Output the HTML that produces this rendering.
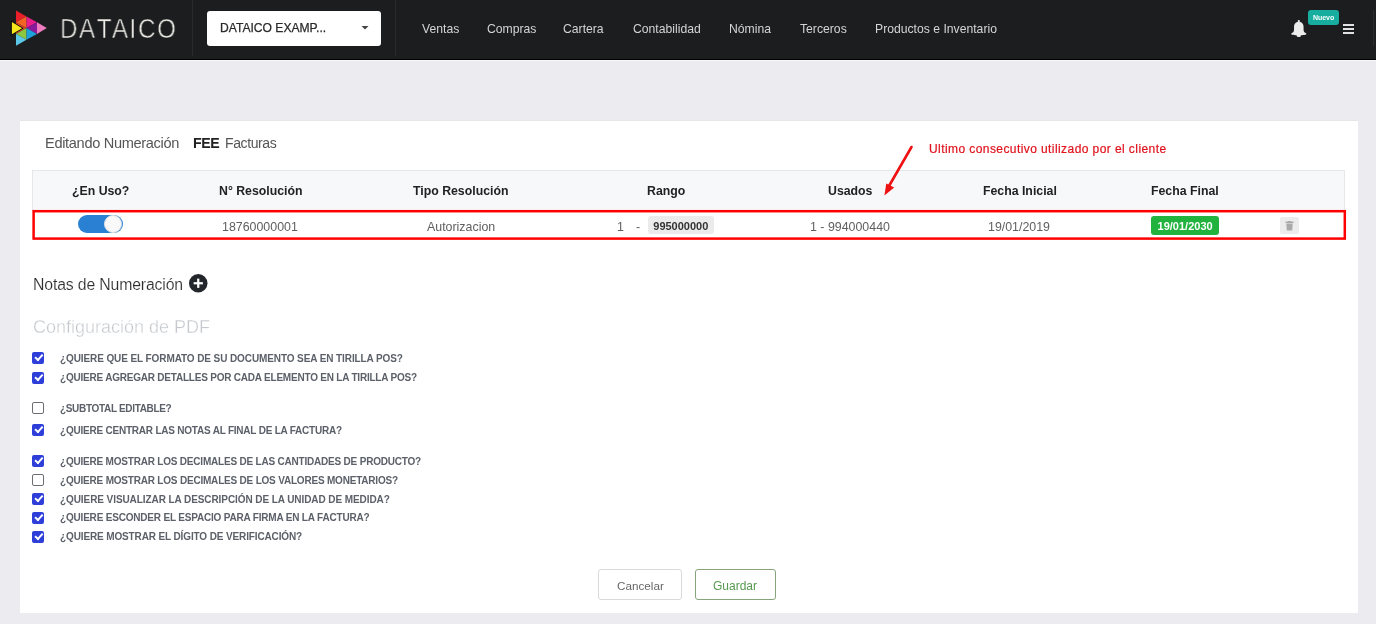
<!DOCTYPE html>
<html><head><meta charset="utf-8">
<style>
*{margin:0;padding:0;box-sizing:border-box}
html,body{width:1376px;height:624px;overflow:hidden}
body{background:#ecebf0;font-family:"Liberation Sans",sans-serif;position:relative}
.a,.menu,.th,.td,.cbt{position:absolute;white-space:nowrap;will-change:transform}
#nav{position:absolute;left:0;top:0;width:1376px;height:60px;background:#1c1d1f;border-bottom:1px solid #000}
#navline{position:absolute;left:0;top:60px;width:1376px;height:1px;background:#f7f7f9}
.lg{transform:scaleX(0.9);transform-origin:50% 50%;top:16px;font-size:27px;line-height:27px;color:#ecebe6;-webkit-text-stroke:0.5px #1c1d1f}
.sep{position:absolute;top:0;width:1px;height:56px;background:#2a2b2e}
.menu{position:absolute;top:22.8px;font-size:12.2px;line-height:12.2px;color:#d4d4d6}
#card{position:absolute;left:20px;top:121px;width:1338px;height:492px;background:#fff;box-shadow:0 -1px 0 #e6e6ea}
.th{position:absolute;top:185px;font-size:12.3px;line-height:12.3px;font-weight:700;color:#222}
.td{position:absolute;top:220.8px;font-size:12.4px;line-height:12.4px;color:#606060}
.cb{position:absolute;left:32px;width:12px;height:12px;border-radius:2px}
.cb.on{background:#2d3fd8}
.cb.on::after{content:"";position:absolute;left:2.6px;top:2.2px;width:6.2px;height:3.4px;border-left:2px solid #fff;border-bottom:2px solid #fff;transform:rotate(-48deg);transform-origin:center}
.cb.off{border:1.5px solid #6d6d73;background:#fff}
.cbt{position:absolute;left:60px;font-size:10px;line-height:10px;font-weight:700;color:#5b6069}
</style></head>
<body>
<div id="nav"></div>
<div id="navline"></div>
<!-- logo -->
<svg class="a" style="left:0;top:0" width="60" height="60" viewBox="0 0 60 60">
  <polygon points="16,10.4 16,22.2 26.5,16.4" fill="#e8202a"/>
  <polygon points="16,22.2 26.5,16.4 26.5,28.1" fill="#f26522"/>
  <polygon points="16,22.2 16,34 26.5,28.1" fill="#d9452a"/>
  <polygon points="16,34 26.5,28.1 26.5,39.8" fill="#8dc63f"/>
  <polygon points="16,34 16,45.8 26.5,39.8" fill="#5bc8e8"/>
  <polygon points="26.5,16.4 26.5,28.1 37,22.2" fill="#e91e8c"/>
  <polygon points="26.5,28.1 37,22.2 37,34" fill="#8a1a9b"/>
  <polygon points="26.5,28.1 26.5,39.8 37,34" fill="#1ea0dc"/>
  <polygon points="37,22.2 37,34 46.8,28" fill="#f07cc0"/>
  <polygon points="10.9,20.6 10.9,35.7 23.7,28.2" fill="#0b0b0c"/>
  <polygon points="11.9,22.1 11.9,34.2 22.1,28.2" fill="#f5e71c"/>
</svg>
<div id="L0" class="a lg" style="left:59.2px">D</div><div id="L1" class="a lg" style="left:78.2px">A</div><div id="L2" class="a lg" style="left:96.2px">T</div><div id="L3" class="a lg" style="left:111.4px">A</div><div id="L4" class="a lg" style="left:129.0px">I</div><div id="L5" class="a lg" style="left:137.2px">C</div><div id="L6" class="a lg" style="left:156.0px">O</div>
<div class="sep" style="left:192px"></div>
<div class="sep" style="left:395px"></div>
<div class="sep" style="left:1373px;top:10px;height:36px"></div>
<!-- dropdown -->
<div id="dd" class="a" style="left:206.5px;top:10.5px;width:174px;height:34.9px;background:#fff;border-radius:3px"></div>
<div id="ddt" class="a" style="left:220px;top:22.3px;font-size:12.1px;line-height:12.1px;color:#2a2a2a;-webkit-text-stroke:0.25px #2a2a2a">DATAICO EXAMP...</div>
<svg class="a" style="left:361px;top:26px" width="8" height="4" viewBox="0 0 8 4"><polygon points="0.5,0 7.5,0 4,3.5" fill="#444"/></svg>
<!-- menu -->
<div id="m1" class="menu" style="left:422px">Ventas</div>
<div id="m2" class="menu" style="left:487px">Compras</div>
<div id="m3" class="menu" style="left:563px">Cartera</div>
<div id="m4" class="menu" style="left:633px">Contabilidad</div>
<div id="m5" class="menu" style="left:729px">Nómina</div>
<div id="m6" class="menu" style="left:800px">Terceros</div>
<div id="m7" class="menu" style="left:875px">Productos e Inventario</div>
<!-- bell -->
<svg class="a" style="left:1291.2px;top:20.3px" width="15.6" height="17.2" viewBox="0 0 16 17.6">
  <circle cx="8" cy="1.1" r="1.1" fill="#ececec"/>
  <path d="M8 1.8C11 1.8 12.9 4 12.9 7V9.4C12.9 11.2 13.3 12.2 14 12.9C15.1 13.3 15.8 13.8 15.8 14.4C15.8 15.2 12.8 15.7 8 15.7C3.2 15.7 0.2 15.2 0.2 14.4C0.2 13.8 0.9 13.3 2 12.9C2.7 12.2 3.1 11.2 3.1 9.4V7C3.1 4 5 1.8 8 1.8Z" fill="#ececec"/>
  <ellipse cx="8" cy="16" rx="2.2" ry="1.5" fill="#ececec"/>
</svg>
<div id="badge" class="a" style="left:1308px;top:9.6px;width:31.2px;height:14.9px;background:#17ae9f;border-radius:3px;color:#fff;font-size:7px;line-height:16.8px;font-weight:700;text-align:center">Nuevo</div>
<div class="a" style="left:1343px;top:23.8px;width:11.2px;height:1.7px;background:#e2e2e2"></div>
<div class="a" style="left:1343px;top:28.1px;width:11.2px;height:1.7px;background:#e2e2e2"></div>
<div class="a" style="left:1343px;top:31.9px;width:11.2px;height:1.7px;background:#e2e2e2"></div>

<!-- card -->
<div id="card"></div>
<div id="t1" class="a" style="left:44.5px;top:136.3px;font-size:14.6px;line-height:15px;letter-spacing:-0.33px;color:#555">Editando Numeración</div>
<div id="t2" class="a" style="left:192.5px;top:136.3px;font-size:14.2px;line-height:15px;letter-spacing:-0.5px;color:#222;font-weight:700">FEE</div>
<div id="t3" class="a" style="left:224.5px;top:136.3px;font-size:14px;line-height:15px;letter-spacing:-0.4px;color:#555">Facturas</div>

<!-- annotation -->
<div id="ann" class="a" style="left:928.5px;top:143.3px;font-size:12px;line-height:12px;letter-spacing:0.42px;color:#e0121c;-webkit-text-stroke:0.2px #e0121c">Ultimo consecutivo utilizado por el cliente</div>
<!-- table -->
<div id="thead" class="a" style="left:32px;top:169.5px;width:1312.5px;height:41px;background:#f7f8fa;border:1px solid #e6e7ea;border-bottom:none"></div>
<div id="h1" class="th" style="left:72px">¿En Uso?</div>
<div id="h2" class="th" style="left:218.5px">N° Resolución</div>
<div id="h3" class="th" style="left:413px">Tipo Resolución</div>
<div id="h4" class="th" style="left:647px">Rango</div>
<div id="h5" class="th" style="left:827.5px">Usados</div>
<div id="h6" class="th" style="left:982.5px">Fecha Inicial</div>
<div id="h7" class="th" style="left:1150.5px">Fecha Final</div>

<svg class="a" style="left:0;top:0" width="1376" height="260">
  <rect x="33.6" y="211.2" width="1311.2" height="27.4" fill="#fff" stroke="#ff0000" stroke-width="2.5"/>
  <line x1="911.5" y1="147" x2="889" y2="186" stroke="#ee1111" stroke-width="2.6" stroke-linecap="round"/>
  <polygon points="884.4,195.6 886.3,183.6 894.2,187.4" fill="#ee1111"/>
</svg>

<!-- row -->
<div id="tog" class="a" style="left:78px;top:215px;width:44.5px;height:18.3px;border-radius:9.2px;background:#2a80d2"></div>
<div id="knob" class="a" style="left:104px;top:214.9px;width:18.3px;height:18.3px;border-radius:50%;background:#f9f9f9;border:1px solid #e2e2e2"></div>
<div id="r2" class="td" style="left:222px">18760000001</div>
<div id="r3" class="td" style="left:426.5px">Autorizacion</div>
<div id="r4a" class="td" style="left:617px">1</div>
<div id="r4b" class="td" style="left:636px">-</div>
<div id="badge2" class="a" style="left:648.4px;top:216.4px;width:65.6px;height:18px;background:#ebebeb;border-radius:3px;font-size:11px;line-height:21px;font-weight:700;color:#333;text-align:center">995000000</div>
<div id="r5" class="td" style="left:810px">1 - 994000440</div>
<div id="r6" class="td" style="left:988px">19/01/2019</div>
<div id="badge3" class="a" style="left:1150.5px;top:216.2px;width:68.2px;height:18.5px;background:#22b33f;border-radius:3px;font-size:11px;line-height:21px;font-weight:700;color:#fff;text-align:center">19/01/2030</div>
<div id="trash" class="a" style="left:1280px;top:217px;width:19.2px;height:16.6px;background:#ececec;border-radius:2px"></div>
<svg class="a" style="left:1285px;top:220.5px" width="9" height="10" viewBox="0 0 9 10"><rect x="0.5" y="0.5" width="8" height="1.5" fill="#a9a9a9"/><rect x="3" y="0" width="3" height="1" fill="#a9a9a9"/><path d="M1.3 2.6h6.4l-.5 7H1.8z" fill="#a9a9a9"/></svg>

<!-- notes -->
<div id="notas" class="a" style="left:32.5px;top:276.8px;font-size:15.8px;line-height:15.5px;letter-spacing:-0.15px;color:#2e2e2e;-webkit-text-stroke:0.15px #fff">Notas de Numeración</div>
<svg class="a" style="left:189px;top:274px" width="18.5" height="18.5" viewBox="0 0 20 20"><circle cx="10" cy="10" r="10" fill="#23272b"/><rect x="5" y="8.8" width="10" height="2.4" fill="#fff"/><rect x="8.8" y="5" width="2.4" height="10" fill="#fff"/></svg>
<div id="conf" class="a" style="left:32.5px;top:318.3px;font-size:18px;line-height:18px;color:#c4c8cd;-webkit-text-stroke:0.35px #fff">Configuración de PDF</div>

<!-- checkboxes -->
<div class="cb on" style="top:352px"></div>
<div id="c1" class="cbt" style="top:353.6px;letter-spacing:-0.098px">¿QUIERE QUE EL FORMATO DE SU DOCUMENTO SEA EN TIRILLA POS?</div>
<div class="cb on" style="top:371.5px"></div>
<div id="c2" class="cbt" style="top:373.1px;letter-spacing:-0.213px">¿QUIERE AGREGAR DETALLES POR CADA ELEMENTO EN LA TIRILLA POS?</div>
<div class="cb off" style="top:402px"></div>
<div id="c3" class="cbt" style="top:403.6px;letter-spacing:-0.328px">¿SUBTOTAL EDITABLE?</div>
<div class="cb on" style="top:424.3px"></div>
<div id="c4" class="cbt" style="top:425.9px;letter-spacing:-0.219px">¿QUIERE CENTRAR LAS NOTAS AL FINAL DE LA FACTURA?</div>
<div class="cb on" style="top:455.2px"></div>
<div id="c5" class="cbt" style="top:456.8px;letter-spacing:-0.203px">¿QUIERE MOSTRAR LOS DECIMALES DE LAS CANTIDADES DE PRODUCTO?</div>
<div class="cb off" style="top:474.1px"></div>
<div id="c6" class="cbt" style="top:475.7px;letter-spacing:-0.200px">¿QUIERE MOSTRAR LOS DECIMALES DE LOS VALORES MONETARIOS?</div>
<div class="cb on" style="top:493.2px"></div>
<div id="c7" class="cbt" style="top:494.8px;letter-spacing:-0.079px">¿QUIERE VISUALIZAR LA DESCRIPCIÓN DE LA UNIDAD DE MEDIDA?</div>
<div class="cb on" style="top:511.8px"></div>
<div id="c8" class="cbt" style="top:513.4px;letter-spacing:-0.190px">¿QUIERE ESCONDER EL ESPACIO PARA FIRMA EN LA FACTURA?</div>
<div class="cb on" style="top:530.5px"></div>
<div id="c9" class="cbt" style="top:532.1px;letter-spacing:-0.127px">¿QUIERE MOSTRAR EL DÍGITO DE VERIFICACIÓN?</div>

<!-- buttons -->
<div id="btn1" class="a" style="left:598.4px;top:569.3px;width:84px;height:30.5px;border:1px solid #d9d9d9;border-radius:3px;background:#fff"></div>
<div id="bt1" class="a" style="left:616.5px;top:580.1px;font-size:11.7px;line-height:11.7px;color:#666">Cancelar</div>
<div id="btn2" class="a" style="left:695px;top:569.3px;width:81px;height:31.2px;border:1.3px solid #86a57a;border-radius:3px;background:#fff"></div>
<div id="bt2" class="a" style="left:713px;top:580.1px;font-size:12px;line-height:12px;color:#56994f">Guardar</div>
</body></html>
